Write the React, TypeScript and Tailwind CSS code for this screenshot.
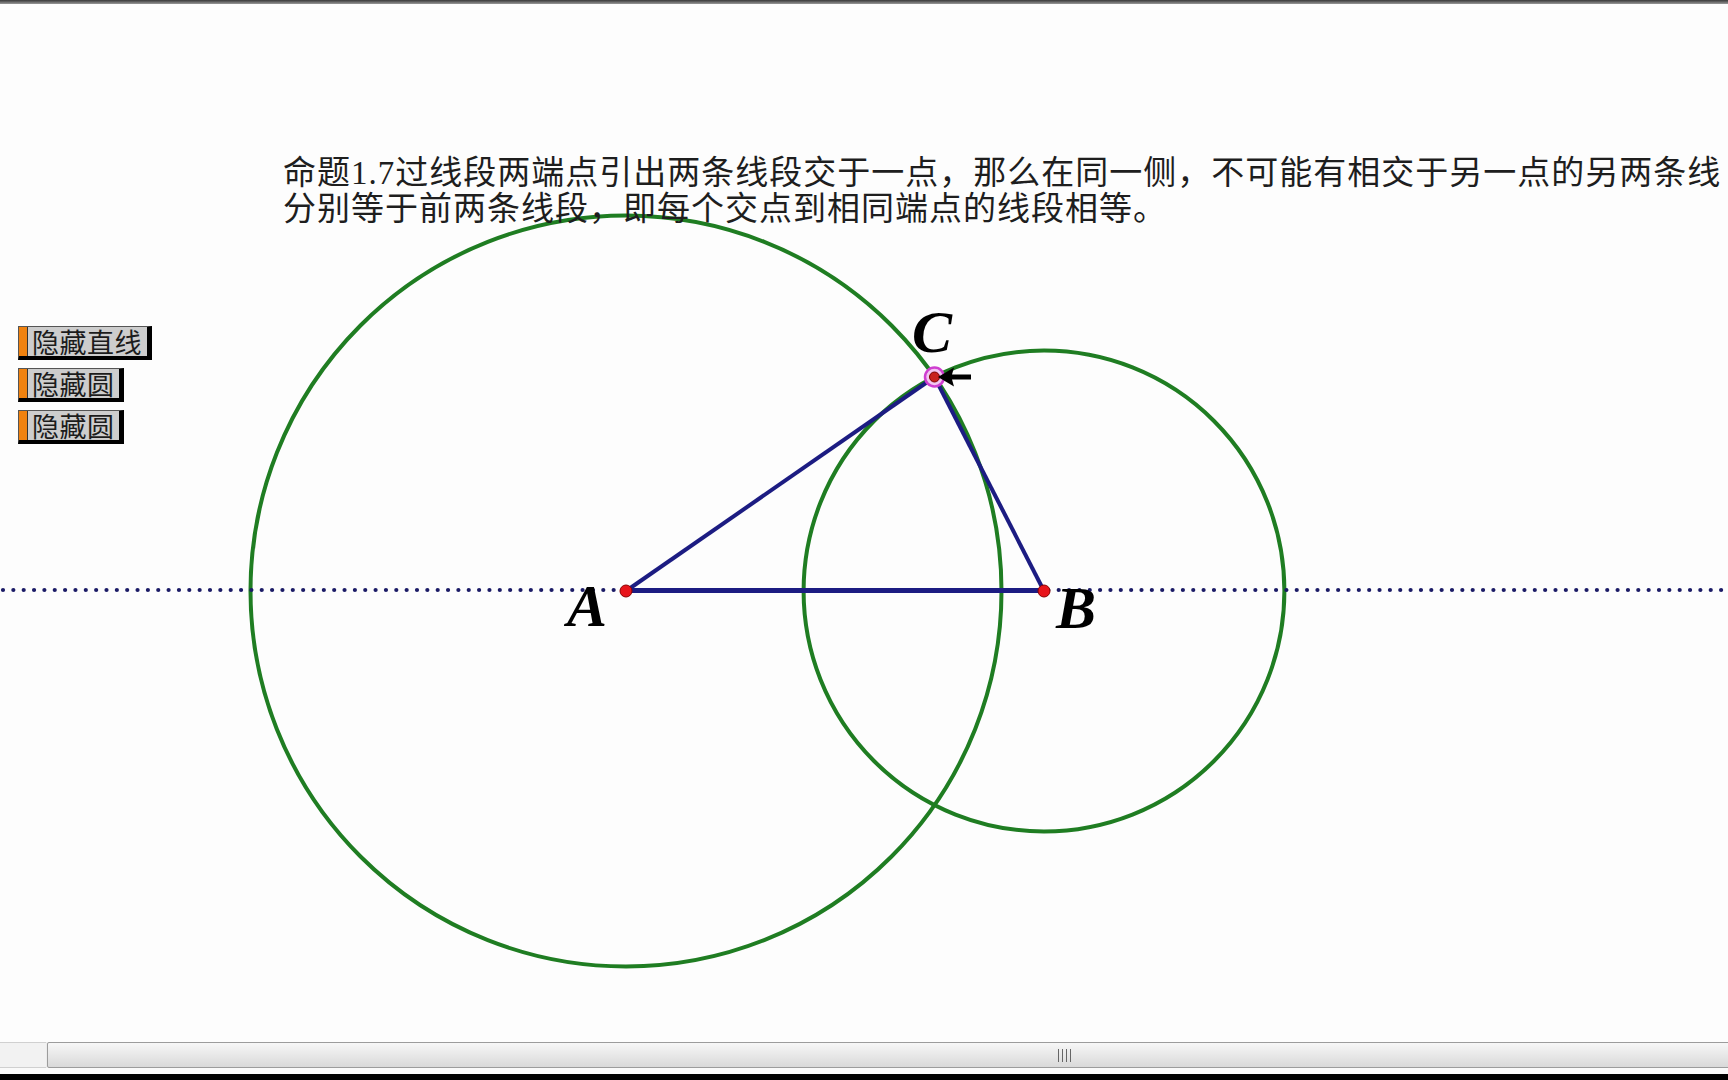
import React from "react";

const cjk = { fontFamily: '"Liberation Serif", "Noto Sans CJK SC", serif' };
const btnFont = { fontFamily: '"Noto Sans CJK SC", "Liberation Sans", sans-serif' };

function HideButton({ label, width }: { label: string; width: string }) {
  return (
    <div className={`flex h-[34px] ${width} border-t border-l border-[#555] border-r-[5px] border-b-[4px] border-r-black border-b-black bg-[#cdcdcd]`}>
      <div className="w-[9px] shrink-0 bg-[#f0820f] border-r border-[#333]" />
      <div className="flex items-center pl-[4px] text-[27px] leading-none tracking-[0.5px] text-[#1c1c1c]" style={btnFont}>
        {label}
      </div>
    </div>
  );
}

export default function App() {
  const A = { x: 626, y: 591 };
  const B = { x: 1044, y: 591 };
  const C = { x: 934.5, y: 377 };
  return (
    <div className="relative flex h-[1080px] w-[1728px] flex-col overflow-hidden bg-[#fdfdfd]">
      <svg className="absolute inset-0" width={1728} height={1080} viewBox="0 0 1728 1080">
        <circle cx={A.x} cy={A.y} r={375.5} fill="none" stroke="#1f7d22" strokeWidth={4} />
        <circle cx={B.x} cy={B.y} r={240.4} fill="none" stroke="#1f7d22" strokeWidth={4} />
        <line x1={3} y1={590} x2={1728} y2={590} stroke="#1b1b66" strokeWidth={4.2} strokeDasharray="0 10.35" strokeLinecap="round" />
        <line x1={A.x} y1={590.5} x2={B.x} y2={590.5} stroke="#1c1c82" strokeWidth={5} />
        <line x1={A.x} y1={A.y} x2={C.x} y2={C.y} stroke="#1c1c82" strokeWidth={4} />
        <line x1={B.x} y1={B.y} x2={C.x} y2={C.y} stroke="#1c1c82" strokeWidth={4} />
        <circle cx={A.x} cy={A.y} r={6} fill="#e8141a" stroke="#8a0000" strokeWidth={1} />
        <circle cx={B.x} cy={B.y} r={6} fill="#e8141a" stroke="#8a0000" strokeWidth={1} />
        <circle cx={C.x} cy={C.y} r={9.5} fill="#f3c6f0" stroke="#cf3fd0" strokeWidth={2.5} />
        <circle cx={C.x} cy={C.y} r={5} fill="#c8201c" stroke="#7a0000" strokeWidth={1} />
        <path d="M938 377 L954 367.5 L952 374.5 L971 374.5 L971 379.5 L952 379.5 L954 386.5 Z" fill="#000" />
        <g fontFamily='"Liberation Serif", serif' fontWeight="bold" fontStyle="italic" fontSize={60} fill="#000">
          <text x={567} y={626}>A</text>
          <text x={1056} y={628}>B</text>
          <text x={912} y={352}>C</text>
        </g>
      </svg>

      <div className="relative h-[4px] shrink-0 bg-gradient-to-b from-[#3a3a3a] to-[#9a9a9a]" />

      <div className="relative flex-1">
        <div className="ml-[283px] mt-[151px] whitespace-nowrap text-[33px] leading-[36px] tracking-[1px] text-[#1e1e1e]" style={cjk}>
          <div>命题1.7过线段两端点引出两条线段交于一点，那么在同一侧，不可能有相交于另一点的另两条线</div>
          <div>分别等于前两条线段，即每个交点到相同端点的线段相等。</div>
        </div>
        <div className="ml-[18px] mt-[99px] flex flex-col gap-[8px]">
          <HideButton label="隐藏直线" width="w-[134px]" />
          <HideButton label="隐藏圆" width="w-[106px]" />
          <HideButton label="隐藏圆" width="w-[106px]" />
        </div>
      </div>

      <div className="relative flex h-[26px] shrink-0 overflow-hidden bg-[#ececec]">
        <div className="w-[46px] shrink-0 border-y border-[#d0d0d0] bg-[#f2f2f2]" />
        <div className="ml-[1px] flex w-[2034px] shrink-0 items-center justify-center rounded-[2px] border border-[#9c9c9c] bg-gradient-to-b from-[#f7f7f7] to-[#d9d9d9]">
          <div className="flex h-[13px] gap-[3px]">
            <div className="w-[1px] bg-[#666]" />
            <div className="w-[1px] bg-[#666]" />
            <div className="w-[1px] bg-[#666]" />
            <div className="w-[1px] bg-[#666]" />
          </div>
        </div>
      </div>
      <div className="relative h-[6px] shrink-0 bg-[#fafafa]" />
      <div className="relative h-[6px] shrink-0 bg-black" />
    </div>
  );
}
